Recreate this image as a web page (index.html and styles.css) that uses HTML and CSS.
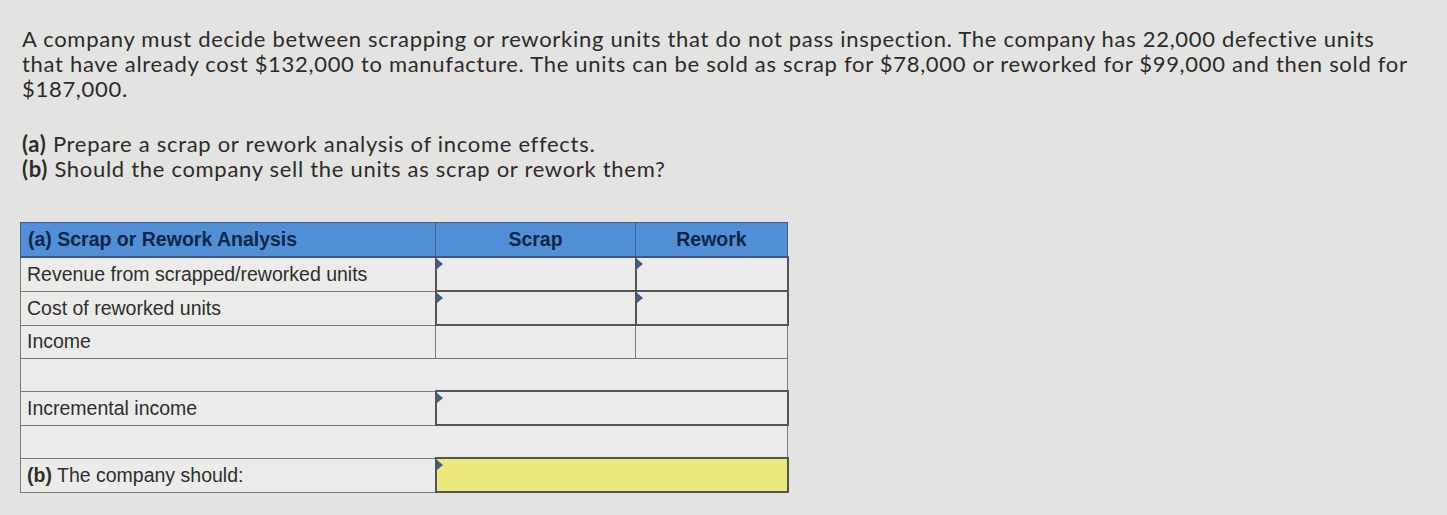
FILE: index.html
```html
<!DOCTYPE html>
<html>
<head>
<meta charset="utf-8">
<link rel="stylesheet" href="styles.css">
</head>
<body>
<div class="page">
  <p class="intro">A company must decide between scrapping or reworking units that do not pass inspection. The company has 22,000 defective units that have already cost $132,000 to manufacture. The units can be sold as scrap for $78,000 or reworked for $99,000 and then sold for $187,000.</p>
  <div class="questions">
    <p><b>(a)</b> Prepare a scrap or rework analysis of income effects.</p>
    <p><b>(b)</b> Should the company sell the units as scrap or rework them?</p>
  </div>
  <table class="grid">
    <colgroup><col class="c-label"><col class="c-scrap"><col class="c-rework"></colgroup>
    <thead>
      <tr><th class="h-label">(a) Scrap or Rework Analysis</th><th>Scrap</th><th>Rework</th></tr>
    </thead>
    <tbody>
      <tr><td class="label">Revenue from scrapped/reworked units</td><td class="input flag"></td><td class="input flag"></td></tr>
      <tr><td class="label">Cost of reworked units</td><td class="input flag"></td><td class="input flag"></td></tr>
      <tr><td class="label">Income</td><td class="plain"></td><td class="plain"></td></tr>
      <tr class="blank"><td colspan="3"></td></tr>
      <tr><td class="label">Incremental income</td><td class="input flag" colspan="2"></td></tr>
      <tr class="blank"><td colspan="3"></td></tr>
      <tr><td class="label"><b>(b)</b> The company should:</td><td class="input flag yellow" colspan="2"></td></tr>
    </tbody>
  </table>
</div>
</body>
</html>
```

FILE: styles.css
```css
html, body {
  margin: 0;
  padding: 0;
  background: #e3e3e1;
}
.page {
  padding: 26px 0 0 22px;
  width: 1396px;
  color: #2b2b2b;
  font-family: Lato, "Open Sans", sans-serif;
}
.intro {
  margin: 0;
  font-size: 22px;
  letter-spacing: 0.7px;
  line-height: 25px;
}
.questions {
  margin-top: 30px;
}
.questions p {
  margin: 0;
  font-size: 22px;
  letter-spacing: 0.7px;
  line-height: 25px;
}
.grid {
  margin-top: 41px;
  margin-left: -2px;
  border-collapse: collapse;
  font-family: "Liberation Sans", Arial, sans-serif;
  font-size: 19.5px;
  color: #2e2e2e;
  table-layout: fixed;
  width: 767px;
}
.c-label { width: 415px; }
.c-scrap { width: 200px; }
.c-rework { width: 152px; }
.grid th {
  background: #5190d6;
  color: #0c2747;
  font-weight: bold;
  height: 33px;
  border: 1px solid #3f5f86;
  border-bottom: 2px solid #3a5a80;
  padding: 0;
  text-align: center;
}
.grid th.h-label {
  text-align: left;
  padding-left: 7px;
}
.grid td {
  height: 32px;
  padding: 0;
  background: #ebebe9;
  border: 1px solid #7a7a7a;
}
.grid td.label {
  padding-left: 6px;
}
.grid td.input {
  position: relative;
  border: 2px solid #555555;
}
.grid td.flag::before {
  content: "";
  position: absolute;
  top: 1px;
  left: 0;
  border-top: 5px solid transparent;
  border-bottom: 5px solid transparent;
  border-left: 6px solid #3c5f91;
}
.grid td.yellow {
  background: #eaea7c;
}
.grid tr.blank td {
  height: 31px;
}
```
